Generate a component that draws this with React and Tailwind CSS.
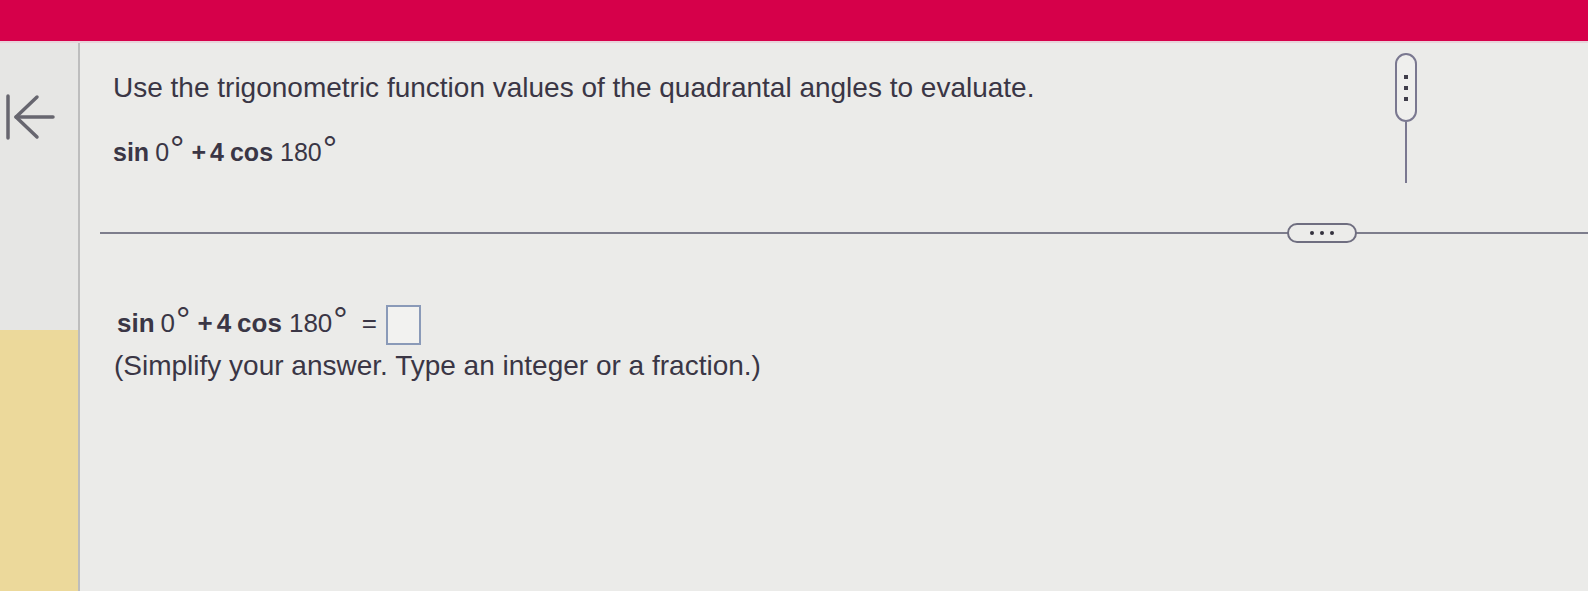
import React from 'react';

function Deg() {
  return <span className="text-[36px] leading-[0] font-normal relative top-[1px] ml-[1px]">°</span>;
}

function Expr({ size }) {
  return (
    <span className={`whitespace-nowrap ${size}`}>
      <span className="font-semibold">sin</span>
      <span className="ml-[6px]">0</span><Deg />
      <span className="font-semibold ml-[7px]">+</span>
      <span className="font-semibold ml-[4px]">4</span>
      <span className="font-semibold ml-[6px]">cos</span>
      <span className="ml-[7px]">180</span><Deg />
    </span>
  );
}

function BackIcon() {
  return (
    <svg width="56" height="52" viewBox="0 0 56 52" fill="none" stroke="#67666f" strokeWidth="3.5" strokeLinecap="round" strokeLinejoin="round">
      <path d="M8 5 V47" />
      <path d="M16 26 H53" />
      <path d="M37 6 L16 26 L37 46" />
    </svg>
  );
}

export default function App() {
  return (
    <div className="w-[1588px] h-[591px] flex flex-col bg-[#ebebe9] overflow-hidden" style={{ fontFamily: '"Liberation Sans", Arial, sans-serif' }}>
      <div className="h-[43px] bg-[#d6004a] shrink-0 border-b-2 border-[#e8d3da]" />
      <div className="flex flex-1">
        {/* sidebar */}
        <div className="w-[80px] flex flex-col border-r-2 border-[#bdbdbd] shrink-0">
          <div className="h-[287px] bg-[#e6e6e4] pt-[48px]">
            <BackIcon />
          </div>
          <div className="flex-1 bg-[#ecd99b]" />
        </div>

        {/* content */}
        <div className="flex-1 flex flex-col text-[#3a3645] text-[28px] leading-[32px]">
          <div className="relative pl-[33px] pt-[29px] h-[189px]">
            <p>Use the trigonometric function values of the quadrantal angles to evaluate.</p>
            <p className="mt-[32px]"><Expr size="text-[25px]" /></p>
            {/* vertical handle */}
            <div className="absolute left-[1315px] top-[10px] flex flex-col items-center">
              <div className="w-[22px] h-[69px] rounded-full border-2 border-[#7a7890] flex flex-col items-center justify-center gap-[7px] bg-[#efefed]">
                <span className="w-[4px] h-[4px] bg-[#3f3d4a]" />
                <span className="w-[4px] h-[4px] bg-[#3f3d4a]" />
                <span className="w-[4px] h-[4px] bg-[#3f3d4a]" />
              </div>
              <div className="w-[2px] h-[61px] bg-[#7a7890]" />
            </div>
          </div>

          {/* divider */}
          <div className="relative ml-[20px] h-[2px] bg-[#7d7d8c]">
            <div className="absolute left-[1187px] -top-[9px] w-[70px] h-[20px] rounded-full border-2 border-[#6f6e80] bg-[#ececea] flex items-center justify-center gap-[6px]">
              <span className="w-[4px] h-[4px] rounded-full bg-[#34323e]" />
              <span className="w-[4px] h-[4px] rounded-full bg-[#34323e]" />
              <span className="w-[4px] h-[4px] rounded-full bg-[#34323e]" />
            </div>
          </div>

          <div className="pl-[37px] pt-[71px]">
            <div className="flex items-start">
              <span className="pt-[2px]"><Expr size="text-[26px]" /></span>
              <span className="ml-[14px] pt-[2px] text-[26px]">=</span>
              <span className="ml-[9px] w-[35px] h-[40px] border-2 border-[#8a9ab8] bg-[#f2f2f0]" />
            </div>
            <p className="mt-[5px] -ml-[3px]">(Simplify your answer. Type an integer or a fraction.)</p>
          </div>
        </div>
      </div>
    </div>
  );
}
